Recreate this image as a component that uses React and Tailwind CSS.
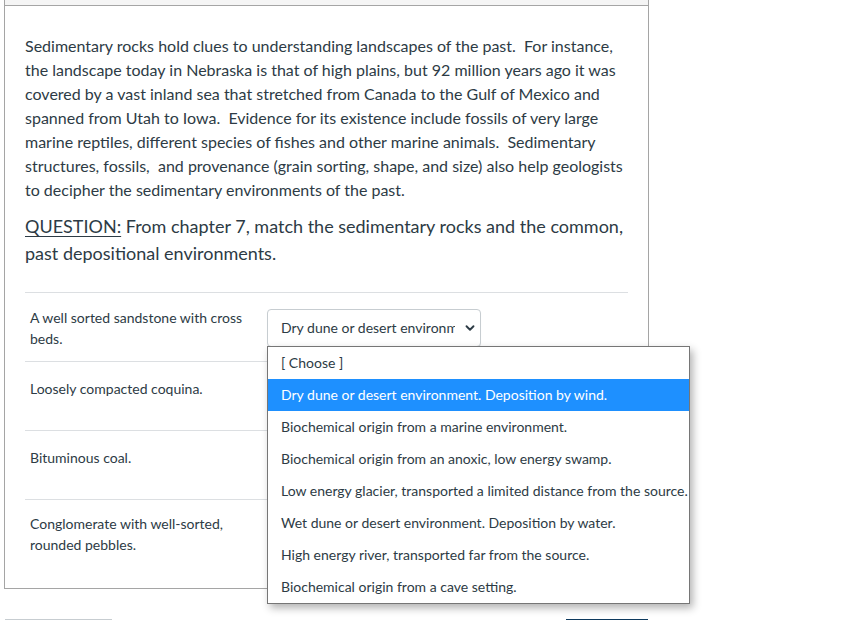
import { ChevronDown } from 'lucide-react'

const options = [
    '[ Choose ]',
    'Dry dune or desert environment. Deposition by wind.',
    'Biochemical origin from a marine environment.',
    'Biochemical origin from an anoxic, low energy swamp.',
    'Low energy glacier, transported a limited distance from the source.',
    'Wet dune or desert environment. Deposition by water.',
    'High energy river, transported far from the source.',
    'Biochemical origin from a cave setting.',
]

const rows = [
    { label: 'A well sorted sandstone with cross beds.', pt: 'pt-[15px]', showSelect: true },
    { label: 'Loosely compacted coquina.', pt: 'pt-[17px]' },
    { label: 'Bituminous coal.', pt: 'pt-[17px]' },
    { label: 'Conglomerate with well-sorted, rounded pebbles.', pt: 'pt-[14px]' },
]

const MatchRow = ({ label, pt, showSelect }) => (
    <div className="flex border-t border-[#dcdfe2]">
        <div className={`w-[242px] pl-[5px] pr-[14px] ${pt} text-[14px] leading-[20.5px]`}>{label}</div>
        <div className="pt-4 pb-[14px]">
            <div className={`h-[38px] w-[214px] rounded-[4px] border border-[#c7cdd1] bg-white flex items-center pl-[13px] pr-[3px] pb-[1px] shadow-[0_1px_1px_rgba(0,0,0,0.06)] ${showSelect ? '' : 'invisible'}`}>
                <div className="w-[174px] overflow-hidden whitespace-nowrap text-[14px] text-[#2d3b45]">
                    Dry dune or desert environment. Deposition by wind.
                </div>
                <ChevronDown size={14} strokeWidth={3.2} className="ml-auto text-[#2d3b45]" />
            </div>
        </div>
    </div>
)

export default function App() {
    return (
        <div className="relative min-h-[621px] bg-white font-['Lato','Noto_Sans',sans-serif] text-[#2d3b45]">
            <div className="ml-1 w-[645px] border-x border-b border-[#a5a5a5]">
                <div className="h-[6px] bg-[#f5f5f5] border-b border-[#a5a5a5]"></div>
                <div className="px-5 pt-[28px] pb-[20px]">
                    <p className="text-[16px] leading-[24px] whitespace-nowrap">
                        Sedimentary rocks hold clues to understanding landscapes of the past.&nbsp; For instance,<br />
                        the landscape today in Nebraska is that of high plains, but 92 million years ago it was<br />
                        covered by a vast inland sea that stretched from Canada to the Gulf of Mexico and<br />
                        spanned from Utah to Iowa.&nbsp; Evidence for its existence include fossils of very large<br />
                        marine reptiles, different species of fishes and other marine animals.&nbsp; Sedimentary<br />
                        structures, fossils,&nbsp; and provenance (grain sorting, shape, and size) also help geologists<br />
                        to decipher the sedimentary environments of the past.
                    </p>
                    <p className="mt-[11px] text-[18px] leading-[27px]">
                        <span className="underline underline-offset-[3px] decoration-1">QUESTION:</span> From chapter 7, match the sedimentary rocks and the common,<br />
                        past depositional environments.
                    </p>
                    <div className="mt-[25px]">
                        {rows.map((r, i) => (
                            <MatchRow key={i} {...r} />
                        ))}
                    </div>
                </div>
            </div>

            <div className="mt-[30px] flex items-start">
                <div className="ml-[5px] w-[107px] border-t border-[#c7cdd1]"></div>
                <div className="ml-auto mr-[199px] w-[82px] h-[1px] bg-[#0e3a5e]"></div>
            </div>

            <div className="absolute left-[267px] top-[346px] w-[423px] border border-[#767676] bg-white shadow-[3px_4px_8px_rgba(0,0,0,0.3)]">
                {options.map((o, i) => (
                    <div
                        key={i}
                        className={`h-[32px] flex items-center pl-[13px] pb-[1px] text-[14px] whitespace-nowrap ${i === 1 ? 'bg-[#1e90ff] text-white' : 'text-[#2d3b45]'}`}
                    >
                        {o}
                    </div>
                ))}
            </div>
        </div>
    )
}
